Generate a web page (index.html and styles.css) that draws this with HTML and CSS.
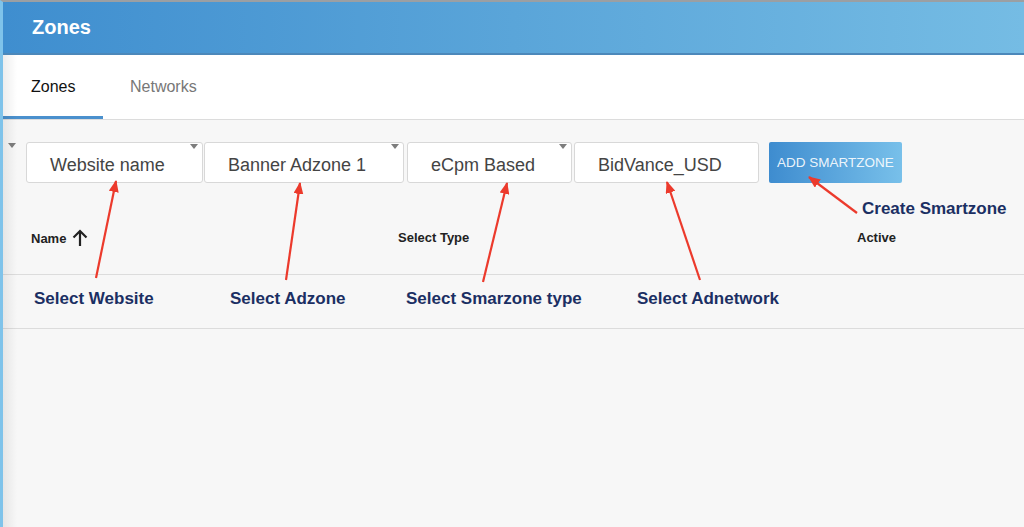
FILE: index.html
```html
<!DOCTYPE html>
<html>
<head>
<meta charset="utf-8">
<link rel="stylesheet" href="styles.css">
</head>
<body>
<div class="page">
  <header class="topbar"><h1 class="title">Zones</h1></header>
  <nav class="tabs">
    <div class="tab active">Zones</div>
    <div class="tab">Networks</div>
  </nav>
  <main class="content">
    <div class="filters">
      <span class="caret lead"></span>
      <div class="field f1">Website name<span class="caret corner"></span></div>
      <div class="field f2">Banner Adzone 1<span class="caret corner"></span></div>
      <div class="field f3">eCpm Based<span class="caret corner"></span></div>
      <div class="field f4">BidVance_USD</div>
      <button class="add">ADD SMARTZONE</button>
    </div>
    <div class="colheads">
      <div class="col">Name
        <svg class="sort" width="16" height="18" viewBox="0 0 16 18"><path d="M8 17V2M1.5 8.5L8 2l6.5 6.5" fill="none" stroke="#222" stroke-width="2.2"/></svg>
      </div>
      <div class="col">Select Type</div>
      <div class="col">Active</div>
    </div>
    <div class="notes">
      <div class="note">Select Website</div>
      <div class="note">Select Adzone</div>
      <div class="note">Select Smarzone type</div>
      <div class="note">Select Adnetwork</div>
    </div>
  </main>
  <div class="callout">Create Smartzone</div>
  <svg class="arrows" width="1024" height="527" viewBox="0 0 1024 527">
    <defs>
      <marker id="ah" markerWidth="12" markerHeight="10" refX="11" refY="5" orient="auto" markerUnits="userSpaceOnUse">
        <path d="M0 0L12 5L0 10z" fill="#ec3a2c"/>
      </marker>
    </defs>
    <g stroke="#ec3a2c" stroke-width="2.2" fill="none" marker-end="url(#ah)">
      <line x1="96" y1="278" x2="116" y2="181"/>
      <line x1="286" y1="280" x2="300" y2="183"/>
      <line x1="483" y1="282" x2="507" y2="183"/>
      <line x1="700" y1="280" x2="667" y2="182"/>
      <line x1="857" y1="213" x2="809" y2="177"/>
    </g>
  </svg>
</div>
</body>
</html>
```
FILE: styles.css
```css
* { box-sizing: border-box; }
html, body { margin: 0; padding: 0; }
body {
  width: 1024px;
  height: 527px;
  overflow: hidden;
  font-family: "Liberation Sans", Arial, sans-serif;
  background: #f7f7f7;
}
.page {
  position: relative;
  width: 1024px;
  height: 527px;
  border-top: 2px solid #9b9fa3;
  border-left: 3px solid #7fc3ea;
  background: #f7f7f7;
  display: flex;
  flex-direction: column;
}
.page::after {
  content: "";
  position: absolute;
  left: 0; top: 53px; bottom: 0;
  width: 14px;
  background: linear-gradient(to right, rgba(0,0,0,0.07), rgba(0,0,0,0));
  pointer-events: none;
}
.topbar {
  height: 53px;
  background: linear-gradient(to right, #3f8ecf, #5aa5d9 50%, #75bce4);
  border-bottom: 2px solid #4c88ba;
  display: flex;
  align-items: center;
  padding-left: 29px;
}
.title {
  margin: 0;
  color: #fff;
  font-size: 20px;
  font-weight: bold;
}
.tabs {
  height: 65px;
  background: #fff;
  border-bottom: 1px solid #dcdcdc;
  display: flex;
}
.tab {
  height: 64px;
  padding: 2px 28px 0;
  font-size: 16px;
  color: #777;
  display: flex;
  align-items: center;
  border-bottom: 3px solid transparent;
}
.tab.active {
  color: #111;
  border-bottom-color: #4a90cd;
  width: 100px;
}
.tab:nth-child(2) { padding-left: 27px; }
.content { flex: 1; }
.filters {
  display: flex;
  align-items: flex-start;
  margin-top: 22px;
  padding-left: 5px;
  height: 41px;
}
.caret {
  width: 0; height: 0;
  border-left: 4px solid transparent;
  border-right: 4px solid transparent;
  border-top: 5px solid #7d7d7d;
}
.caret.lead { margin-top: 1px; margin-right: 10px; }
.caret.corner { position: absolute; top: 1px; right: 4px; }
.field {
  position: relative;
  height: 41px;
  background: #fff;
  border: 1px solid #d8d8d8;
  border-radius: 3px;
  font-size: 18px;
  color: #444;
  display: flex;
  align-items: center;
  padding: 5px 0 0 23px;
}
.f1 { width: 177px; }
.f2 { width: 200px; margin-left: 1px; }
.f3 { width: 165px; margin-left: 3px; }
.f4 { width: 185px; margin-left: 2px; }
.add {
  margin-left: 10px;
  width: 133px;
  height: 41px;
  border: none;
  border-radius: 2px;
  background: linear-gradient(to right, #3e8ccf, #78c0ea);
  color: rgba(255,255,255,0.9);
  font-family: "Liberation Sans", Arial, sans-serif;
  font-size: 13.5px;
  padding: 0 0 1px 0;
  text-align: center;
}
.colheads {
  display: grid;
  grid-template-columns: 367px 459px 1fr;
  align-items: start;
  height: 92px;
  padding: 47px 0 0 28px;
  border-bottom: 1px solid #dcdcdc;
}
.col {
  font-size: 13px;
  font-weight: bold;
  color: #222;
  line-height: 16px;
  display: flex;
  align-items: center;
}
.sort { margin-left: 6px; position: relative; top: -1px; }
.notes {
  display: grid;
  grid-template-columns: 196px 176px 231px 1fr;
  height: 54px;
  padding-left: 31px;
  align-items: center;
  border-bottom: 1px solid #dcdcdc;
}
.note {
  font-size: 17px;
  font-weight: bold;
  color: #1b2f63;
  position: relative;
  top: -3px;
}
.callout {
  position: absolute;
  left: 859px;
  top: 197px;
  font-size: 17px;
  font-weight: bold;
  color: #1b2f63;
}
.arrows {
  position: absolute;
  left: -3px;
  top: -2px;
  pointer-events: none;
}
```
